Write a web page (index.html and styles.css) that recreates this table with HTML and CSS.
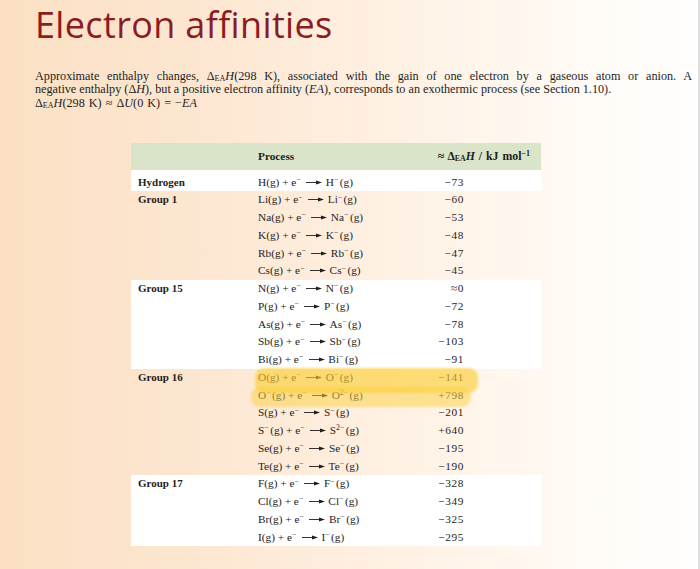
FILE: index.html
```html
<!DOCTYPE html>
<html lang="en">
<head>
<meta charset="utf-8">
<title>Electron affinities</title>
<link rel="stylesheet" href="styles.css">
</head>
<body>
<svg class="defs" width="0" height="0" aria-hidden="true">
  <symbol id="arrow" viewBox="0 0 16 5">
    <path d="M0 2.5H11" stroke="#1e1e1e" stroke-width="0.9" fill="none"/>
    <path d="M10 0.6L16 2.5L10 4.4Z" fill="#1e1e1e"/>
  </symbol>
</svg>
<div class="page">
  <h1 class="title">Electron affinities</h1>
  <div class="intro">
    <p class="line just">Approximate enthalpy changes, Δ<sub>EA</sub><i>H</i>(298 K), associated with the gain of one electron by a gaseous atom or anion. A</p>
    <p class="line">negative enthalpy (Δ<i>H</i>), but a positive electron affinity (<i>EA</i>), corresponds to an exothermic process (see Section 1.10).</p>
    <p class="line formula">Δ<sub>EA</sub><i>H</i>(298 K) ≈ Δ<i>U</i>(0 K) = −<i>EA</i></p>
  </div>
  <div class="table-wrap">
    <table class="ea">
      <colgroup>
        <col class="c-group"><col class="c-proc"><col class="c-val"><col class="c-pad">
      </colgroup>
      <thead>
        <tr>
          <th></th>
          <th class="h-proc">Process</th>
          <th class="h-val" colspan="2">≈ Δ<sub>EA</sub><i>H</i> / kJ mol<sup>−1</sup></th>
        </tr>
      </thead>
      <tbody class="band white first">
        <tr><td class="grp">Hydrogen</td><td>H(g) + e<sup>−</sup> <svg class="arr"><use href="#arrow"/></svg> H<sup>−</sup>(g)</td><td class="val">−73</td><td></td></tr>
      </tbody>
      <tbody class="band">
        <tr><td class="grp">Group 1</td><td>Li(g) + e<sup>−</sup> <svg class="arr"><use href="#arrow"/></svg> Li<sup>−</sup>(g)</td><td class="val">−60</td><td></td></tr>
        <tr><td></td><td>Na(g) + e<sup>−</sup> <svg class="arr"><use href="#arrow"/></svg> Na<sup>−</sup>(g)</td><td class="val">−53</td><td></td></tr>
        <tr><td></td><td>K(g) + e<sup>−</sup> <svg class="arr"><use href="#arrow"/></svg> K<sup>−</sup>(g)</td><td class="val">−48</td><td></td></tr>
        <tr><td></td><td>Rb(g) + e<sup>−</sup> <svg class="arr"><use href="#arrow"/></svg> Rb<sup>−</sup>(g)</td><td class="val">−47</td><td></td></tr>
        <tr><td></td><td>Cs(g) + e<sup>−</sup> <svg class="arr"><use href="#arrow"/></svg> Cs<sup>−</sup>(g)</td><td class="val">−45</td><td></td></tr>
      </tbody>
      <tbody class="band white">
        <tr><td class="grp">Group 15</td><td>N(g) + e<sup>−</sup> <svg class="arr"><use href="#arrow"/></svg> N<sup>−</sup>(g)</td><td class="val">≈0</td><td></td></tr>
        <tr><td></td><td>P(g) + e<sup>−</sup> <svg class="arr"><use href="#arrow"/></svg> P<sup>−</sup>(g)</td><td class="val">−72</td><td></td></tr>
        <tr><td></td><td>As(g) + e<sup>−</sup> <svg class="arr"><use href="#arrow"/></svg> As<sup>−</sup>(g)</td><td class="val">−78</td><td></td></tr>
        <tr><td></td><td>Sb(g) + e<sup>−</sup> <svg class="arr"><use href="#arrow"/></svg> Sb<sup>−</sup>(g)</td><td class="val">−103</td><td></td></tr>
        <tr><td></td><td>Bi(g) + e<sup>−</sup> <svg class="arr"><use href="#arrow"/></svg> Bi<sup>−</sup>(g)</td><td class="val">−91</td><td></td></tr>
      </tbody>
      <tbody class="band">
        <tr><td class="grp">Group 16</td><td>O(g) + e<sup>−</sup> <svg class="arr"><use href="#arrow"/></svg> O<sup>−</sup>(g)</td><td class="val">−141</td><td></td></tr>
        <tr><td></td><td>O<sup>−</sup>(g) + e<sup>−</sup> <svg class="arr"><use href="#arrow"/></svg> O<sup>2−</sup>(g)</td><td class="val">+798</td><td></td></tr>
        <tr><td></td><td>S(g) + e<sup>−</sup> <svg class="arr"><use href="#arrow"/></svg> S<sup>−</sup>(g)</td><td class="val">−201</td><td></td></tr>
        <tr><td></td><td>S<sup>−</sup>(g) + e<sup>−</sup> <svg class="arr"><use href="#arrow"/></svg> S<sup>2−</sup>(g)</td><td class="val">+640</td><td></td></tr>
        <tr><td></td><td>Se(g) + e<sup>−</sup> <svg class="arr"><use href="#arrow"/></svg> Se<sup>−</sup>(g)</td><td class="val">−195</td><td></td></tr>
        <tr><td></td><td>Te(g) + e<sup>−</sup> <svg class="arr"><use href="#arrow"/></svg> Te<sup>−</sup>(g)</td><td class="val">−190</td><td></td></tr>
      </tbody>
      <tbody class="band white">
        <tr><td class="grp">Group 17</td><td>F(g) + e<sup>−</sup> <svg class="arr"><use href="#arrow"/></svg> F<sup>−</sup>(g)</td><td class="val">−328</td><td></td></tr>
        <tr><td></td><td>Cl(g) + e<sup>−</sup> <svg class="arr"><use href="#arrow"/></svg> Cl<sup>−</sup>(g)</td><td class="val">−349</td><td></td></tr>
        <tr><td></td><td>Br(g) + e<sup>−</sup> <svg class="arr"><use href="#arrow"/></svg> Br<sup>−</sup>(g)</td><td class="val">−325</td><td></td></tr>
        <tr><td></td><td>I(g) + e<sup>−</sup> <svg class="arr"><use href="#arrow"/></svg> I<sup>−</sup>(g)</td><td class="val">−295</td><td></td></tr>
      </tbody>
    </table>
    <div class="hl hl-a"></div>
    <div class="hl hl-b"></div>
  </div>
</div>
</body>
</html>
```

FILE: styles.css
```css
html, body {
  margin: 0;
  padding: 0;
}
body {
  background: linear-gradient(to right, #fbe0c3 0%, #fde7d2 30%, #fff3e7 62%, #fffbf7 85%, #fffefd 100%);
  font-family: "Liberation Serif", "Times New Roman", serif;
  color: #1e1e1e;
}
.defs {
  position: absolute;
  width: 0;
  height: 0;
  overflow: hidden;
}
.page {
  box-sizing: border-box;
  width: 700px;
  height: 569px;
  padding: 5px 0 0 35px;
  border-right: 2px solid #e0e0e0;
  overflow: hidden;
}
.title {
  margin: 0;
  font-family: "Open Sans", "Liberation Sans", sans-serif;
  font-weight: 400;
  font-size: 36px;
  line-height: 40px;
  color: #8b1c24;
  letter-spacing: 0.35px;
}
.intro {
  margin-top: 25px;
  width: 657px;
  font-size: 12.2px;
  line-height: 13.3px;
}
.line {
  margin: 0;
  white-space: nowrap;
}
.line.just {
  white-space: normal;
  text-align: justify;
  text-align-last: justify;
}
.formula {
  word-spacing: 1px;
}
sub {
  font-size: 0.66em;
  line-height: 0;
  vertical-align: -0.18em;
}
sup {
  font-size: 0.68em;
  line-height: 0;
  vertical-align: 0.5em;
}
.table-wrap {
  position: relative;
  margin: 33px 0 0 96px;
  width: 410px;
}
.ea {
  border-collapse: collapse;
  border-spacing: 0;
  width: 410px;
  table-layout: fixed;
  font-size: 11.3px;
}
.c-group { width: 127px; }
.c-proc { width: 150px; }
.c-val { width: 56px; }
.c-pad { width: 77px; }
.ea thead tr {
  background: #d9e4c8;
  height: 27px;
}
.ea th {
  padding: 0;
  font-weight: 700;
  text-align: left;
  vertical-align: middle;
}
.ea th.h-val {
  text-align: right;
  padding-right: 11px;
  font-size: 11.8px;
  word-spacing: 1px;
}
.ea td {
  padding: 0;
  height: 17.75px;
  line-height: 17.75px;
  white-space: nowrap;
  vertical-align: middle;
}
.ea td sup {
  margin-right: 1.5px;
}
.band.white {
  background: #ffffff;
}
.band.first td {
  padding-top: 3.75px;
}
.ea td.grp {
  font-weight: 700;
  padding-left: 7px;
  font-size: 11px;
}
.ea td.val {
  text-align: right;
  letter-spacing: 0.6px;
}
.arr {
  width: 16px;
  height: 5px;
  vertical-align: 1px;
  margin: 0 1px;
}
.hl {
  position: absolute;
  background: rgba(252, 205, 48, 0.62);
  border-radius: 9px;
  filter: blur(1.2px);
  pointer-events: none;
}
.hl-a {
  left: 124px;
  top: 225px;
  width: 223px;
  height: 25px;
}
.hl-b {
  left: 120px;
  top: 244px;
  width: 220px;
  height: 20px;
  background: rgba(252, 208, 60, 0.5);
}
```
